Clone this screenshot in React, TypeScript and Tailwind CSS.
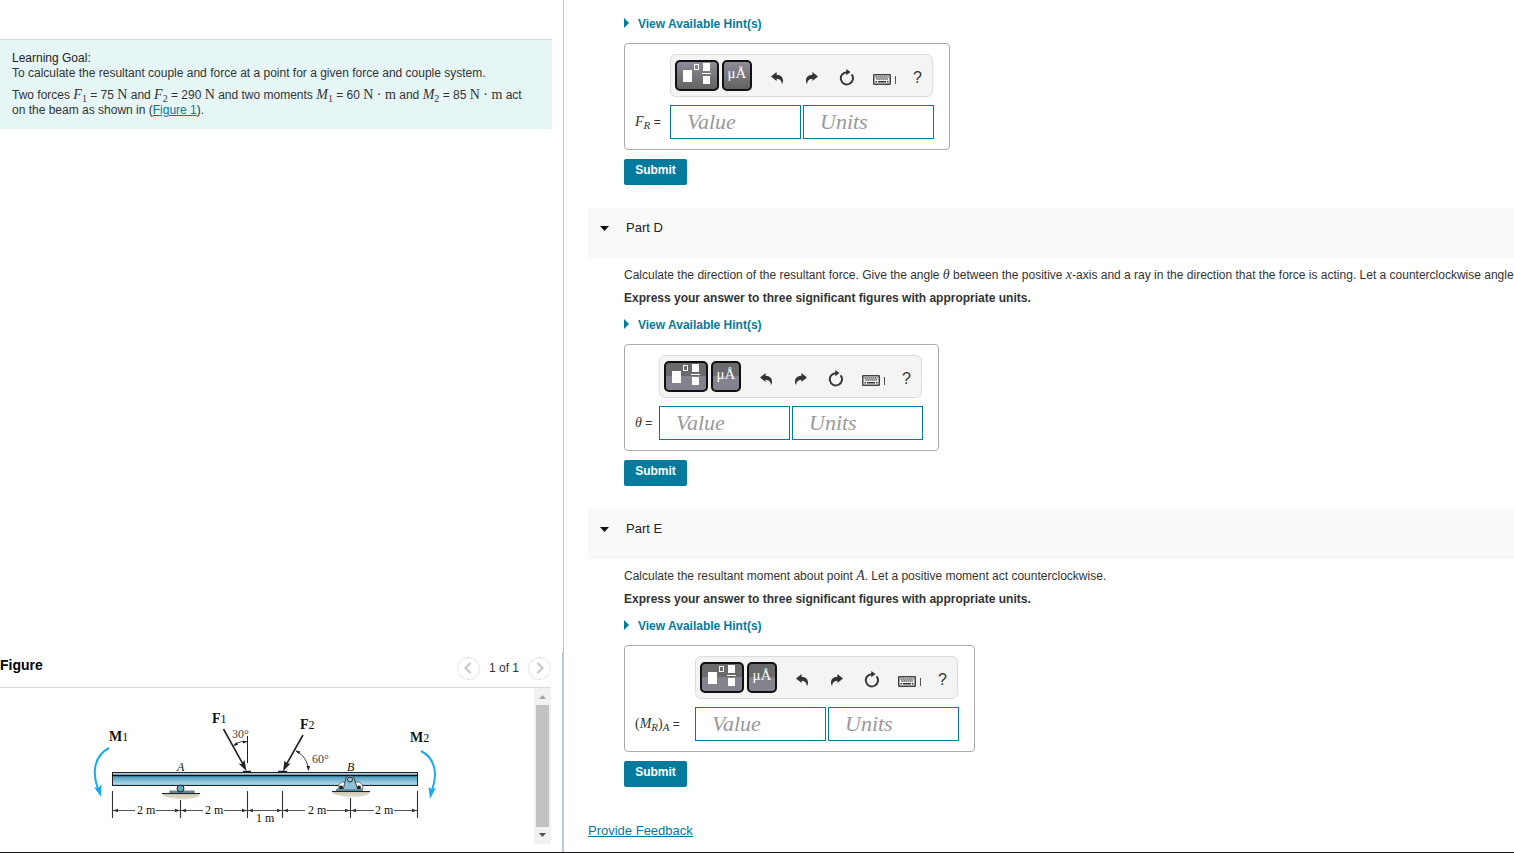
import type { ReactNode } from "react";

interface AnswerProps {
  id: string;
  label: ReactNode;
  labelName: string;
  labelWidth: string;
  buttonFill: string;
}

const FILL_SMOOTH = "bg-linear-to-b from-[#8e8c97] to-[#626262]";
const FILL_SPLIT = "bg-linear-to-b from-[#6a6a6c] from-50% to-[#84838d] to-50%";

function Sym({ name, sub }: { name: string; sub?: string }) {
  return (
    <span className="font-['Liberation_Serif',serif] text-[14px] leading-none italic">
      {name}
      {sub && <span className="relative top-[3px] text-[10px] not-italic">{sub}</span>}
    </span>
  );
}

function ItalicSub({ children }: { children: ReactNode }) {
  return (
    <span className="relative top-[3px] font-['Liberation_Serif',serif] text-[11px] leading-none italic">
      {children}
    </span>
  );
}

function Unit({ children }: { children: ReactNode }) {
  return <span className="font-['Liberation_Serif',serif] text-[14px] leading-none">{children}</span>;
}

function UndoIcon({ flip }: { flip?: boolean }) {
  return (
    <svg viewBox="0 0 12 14" className={flip ? "h-3.5 w-3 -scale-x-100" : "h-3.5 w-3"} fill="#333">
      <path d="M0 5.500L5.600 1v2.800C9.600 4 12 6.400 12 9.600c0 1.400-.3 2.500-1.200 3.600C11 10.400 9.200 7.900 5.600 7.800V10z" />
    </svg>
  );
}

function ResetIcon() {
  return (
    <svg viewBox="0 0 16 17" className="h-[17px] w-4" fill="none" stroke="#333" strokeWidth="1.900">
      <path d="M12.600 5.400A6.100 6.100 0 1 1 8 3.200" />
      <path d="M7.300 0l4.200 3-4.200 3.200z" fill="#333" stroke="none" />
    </svg>
  );
}

function KeyboardIcon() {
  return (
    <svg viewBox="0 0 18 11" className="mt-1 h-[11px] w-[18px]">
      <rect x="0.750" y="0.750" width="16.500" height="9.500" rx="0.500" fill="#f7f7f7" stroke="#444" strokeWidth="1.500" />
      <path d="M2.500 3h13M3.500 5h12" stroke="#333" strokeWidth="1.400" strokeDasharray="1.200 0.800" />
      <path d="M2.500 7.700h1.500M5 7.700h8M14 7.700h1.500" stroke="#333" strokeWidth="1.400" />
    </svg>
  );
}

function Toolbar({ buttonFill }: { buttonFill: string }) {
  const dark = `flex h-[31px] shrink-0 items-center justify-center rounded-[5px] border-2 border-[#111] ${buttonFill}`;
  const tool = "flex h-full w-[35px] shrink-0 items-center justify-center";
  return (
    <div className="flex h-[43px] w-[263px] items-center rounded-md border border-[#dcdcdc] bg-[#f4f4f4] pl-1">
      <button aria-label="Templates" className={`${dark} w-11 pb-1`}>
        <svg viewBox="0 0 28 22" className="h-[22px] w-7" fill="#fff">
          <rect x="0" y="7" width="9" height="12" />
          <rect x="11.500" y="1.500" width="4" height="5" fill="none" stroke="#fff" />
          <rect x="20" y="0" width="7" height="8" />
          <rect x="19" y="10" width="9" height="1" />
          <rect x="20" y="13" width="7" height="8" />
        </svg>
      </button>
      <button
        aria-label="Symbols"
        className={`${dark} ml-[3px] w-[30px] pb-1 font-['Liberation_Serif',serif] text-[15px] leading-none text-white`}
      >
        μÅ
      </button>
      <div className="ml-[7px] flex h-full items-center pt-1">
        <button aria-label="Undo" className={tool}><UndoIcon /></button>
        <button aria-label="Redo" className={tool}><UndoIcon flip /></button>
        <button aria-label="Reset" className={tool}><ResetIcon /></button>
        <button aria-label="Keyboard shortcuts" className={tool}><KeyboardIcon /></button>
        <span className="-ml-1 mt-1 h-2 w-px shrink-0 bg-[#555]" />
        <button aria-label="Help" className={`${tool} ml-1 text-[16px] text-[#333]`}>?</button>
      </div>
    </div>
  );
}

function Answer({ id, label, labelName, labelWidth, buttonFill }: AnswerProps) {
  const field =
    "h-[34px] w-[131px] border border-[#047a9c] bg-white pl-4 font-['Liberation_Serif',serif] text-[22px] italic outline-none placeholder:text-[#999]";
  return (
    <>
      <button className="flex items-center text-[12px] leading-4 font-bold text-[#047a9c]">
        <svg viewBox="0 0 5 10" className="mr-[9px] mb-0.5 h-[10px] w-[5px]" fill="#047a9c">
          <path d="M0 0l5 5-5 5z" />
        </svg>
        View Available Hint(s)
      </button>
      <div className="mt-[11px] w-fit rounded border border-[#aaa] py-[10px] pr-[15px] pl-[10px]">
        <div className="flex">
          <div className={labelWidth} />
          <Toolbar buttonFill={buttonFill} />
        </div>
        <div className="mt-2 flex items-center">
          <label htmlFor={`${id}-value`} aria-label={labelName} className={`${labelWidth} text-[12px] whitespace-nowrap`}>
            {label}
          </label>
          <div className="flex gap-0.5">
            <input id={`${id}-value`} placeholder="Value" className={field} />
            <input aria-label={`${labelName} units`} placeholder="Units" className={field} />
          </div>
        </div>
      </div>
      <button className="mt-[9px] h-[26px] w-[63px] rounded-[2px] bg-[#047a9c] pb-1 text-[12px] font-bold text-white">
        Submit
      </button>
    </>
  );
}

function Part({ title, question, children }: { title: string; question: ReactNode; children: ReactNode }) {
  return (
    <section className="mt-[23px]">
      <button className="flex h-[50px] w-full items-center bg-[#f9f9f9] pb-[10px] pl-3 text-[13px] text-[#222]">
        <svg viewBox="0 0 9 5" className="mr-[17px] h-[5px] w-[9px]" fill="#111">
          <path d="M0 0h9L4.500 5z" />
        </svg>
        {title}
      </button>
      <div className="pl-9">
        <p className="mt-[9px] text-[12px] leading-4 whitespace-nowrap">{question}</p>
        <p className="mt-[7px] mb-[11px] text-[12px] leading-4 font-bold">
          Express your answer to three significant figures with appropriate units.
        </p>
        {children}
      </div>
    </section>
  );
}

// small arrowheads at both ends of a dimension line
function Dim({ from, to }: { from: number; to: number }) {
  return (
    <path
      d={`M${from} 122.500l5-1.800v3.600zM${to} 122.500l-5-1.800v3.600z`}
      fill="#333"
    />
  );
}

function BeamFigure() {
  return (
    <svg
      viewBox="0 0 534 156"
      className="h-[156px] w-[534px] shrink-0 font-['Liberation_Serif',serif]"
      role="img"
      aria-label="Beam with forces F1, F2 and moments M1, M2"
    >
      <defs>
        <linearGradient id="beam" x1="0" y1="0" x2="0" y2="1">
          <stop offset="0" stopColor="#3d93b8" />
          <stop offset="0.300" stopColor="#4b9cbf" />
          <stop offset="0.850" stopColor="#a9d5e6" />
          <stop offset="1" stopColor="#7fb9d2" />
        </linearGradient>
        <linearGradient id="ground" x1="0" y1="0" x2="0" y2="1">
          <stop offset="0" stopColor="#c9c5b2" />
          <stop offset="1" stopColor="#e9e6d8" />
        </linearGradient>
      </defs>

      {/* Moments */}
      <g fill="none" stroke="#1ca8ec" strokeWidth="2">
        <path d="M109 60C92 69 93 88 98 101" />
        <path d="M421 63C435 70 438 86 432 102" />
      </g>
      <path d="M101 109L94 99l4 1.500 3.500-4.500z" fill="#1ca8ec" />
      <path d="M430 111L428.500 99l3.500 2.500 4-2z" fill="#1ca8ec" />

      {/* Beam */}
      <rect x="112.500" y="84.500" width="305" height="13" fill="url(#beam)" stroke="#222" />
      <rect x="113" y="85" width="304" height="2" fill="#a8cfdf" />
      <path d="M112 87.500h306" stroke="#111" strokeWidth="1.300" />

      {/* Roller at A */}
      <path d="M162 106h38c-2 4-7 4-12 5s-13 0-17-1-7-1-9-4z" fill="url(#ground)" />
      <path d="M162 105.500h38" stroke="#222" />
      <rect x="170" y="103" width="24" height="2" fill="#7fb6cc" stroke="#222" strokeWidth="0.600" />
      <circle cx="180.500" cy="100.500" r="3.500" fill="#5aa5c0" stroke="#222" />

      {/* Pin at B */}
      <path d="M332 104h38c-2 4-7 4-12 5s-13 0-17-1-7-1-9-4z" fill="url(#ground)" />
      <path d="M338 101c0-4 2-7 5-7h15c3 0 5 3 5 7z" fill="#f5f9fb" stroke="#444" strokeWidth="0.700" />
      <path d="M346 90c1-3 7-3 8 0l4 12h-15z" fill="#8dc0d6" stroke="#222" strokeWidth="0.800" />
      <circle cx="350" cy="91.500" r="2.500" fill="#9ec9da" stroke="#222" />
      <circle cx="341" cy="99.500" r="2" fill="#222" />
      <circle cx="359" cy="99.500" r="2" fill="#222" />
      <rect x="336" y="101" width="27" height="2" fill="#5b8ca0" />
      <path d="M332 103.500h38" stroke="#222" />

      {/* Forces */}
      <g stroke="#222" fill="none">
        <path d="M223.500 41L244 78M303 47L285.500 78" strokeWidth="1.600" />
        <path d="M247.500 48v27" />
        <path d="M243 83.500h8M278 83.500h9" strokeWidth="1.500" />
        <path d="M234 57c4-3 9-4 13-3.500" strokeWidth="0.900" />
        <path d="M296 63c7 3 12 11 12.500 19" strokeWidth="0.900" />
      </g>
      <path d="M246.500 83l-8-7.500 3 .5 3-4zM283 83.500l1.500-11 2.500 3 3.500 0z" fill="#222" />
      <path d="M233 58l3.500-4 1.500 3zM247 54l-4-1.500v3zM295.500 62.500l5 1-2 2.500zM308.500 83l-2-5h3.500z" fill="#222" />

      {/* Dimensions */}
      <path
        d="M112.500 103v27M180.500 112v18M247.500 103v27M282.500 103v27M350.500 110v20M417.500 103v27"
        stroke="#333"
        strokeWidth="1.100"
      />
      <path
        d="M113 122.500h22M156 122.500h47M224 122.500h81M327 122.500h47M394 122.500h23"
        stroke="#444"
        strokeWidth="0.900"
      />
      <Dim from={113} to={180} />
      <Dim from={181} to={247} />
      <Dim from={248} to={282} />
      <Dim from={283} to={350} />
      <Dim from={351} to={417} />

      <g fill="#111" fontSize="12">
        <text x="137" y="126">2 m</text>
        <text x="205" y="126">2 m</text>
        <text x="256" y="134">1 m</text>
        <text x="308" y="126">2 m</text>
        <text x="375" y="126">2 m</text>
        <text x="232" y="50" fill="#444">30°</text>
        <text x="312" y="75" fill="#444">60°</text>
        <text x="177" y="83" fontStyle="italic">A</text>
        <text x="347" y="83" fontStyle="italic">B</text>
      </g>
      <g fill="#111" fontSize="14" fontWeight="bold">
        <text x="109" y="53">M<tspan fontSize="12" fontWeight="normal">1</tspan></text>
        <text x="212" y="35">F<tspan fontSize="12" fontWeight="normal">1</tspan></text>
        <text x="300" y="41">F<tspan fontSize="12" fontWeight="normal">2</tspan></text>
        <text x="410" y="54">M<tspan fontSize="12" fontWeight="normal">2</tspan></text>
      </g>
    </svg>
  );
}

function PagerButton({ label, d }: { label: string; d: string }) {
  return (
    <button aria-label={label} className="flex h-[23px] w-[23px] items-center justify-center rounded-full border border-[#e2e2e2]">
      <svg viewBox="0 0 8 12" className="h-3 w-2" fill="none" stroke="#c4c4c4" strokeWidth="2">
        <path d={d} />
      </svg>
    </button>
  );
}

export default function App() {
  return (
    <div className="flex h-screen overflow-hidden border-b border-[#1c1616] bg-white font-['Liberation_Sans',Arial,sans-serif] text-[#333]">
      <aside className="flex w-[564px] shrink-0 flex-col">
        <div className="flex-1 border-r border-[#c3c8d6] pt-[39px] pr-[11px]">
          <div className="h-[90px] border-t border-[#dcdcdc] bg-[#e6f6f7] px-3 pt-[11px] text-[12px] leading-[15px]">
            <h2 className="text-[#222]">Learning Goal:</h2>
            <p>To calculate the resultant couple and force at a point for a given force and couple system.</p>
            <p className="mt-[7px] pr-3">
              Two forces <Sym name="F" sub="1" /> = 75 <Unit>N</Unit> and <Sym name="F" sub="2" /> = 290 <Unit>N</Unit> and
              two moments <Sym name="M" sub="1" /> = 60 <Unit>N · m</Unit> and <Sym name="M" sub="2" /> = 85{" "}
              <Unit>N · m</Unit> act on the beam as shown in (
              <a href="#figure" className="text-[#047a9c] underline">Figure 1</a>).
            </p>
          </div>
        </div>

        <div id="figure" className="border-r-2 border-[#b9cce0] pr-[11px] pb-2">
          <div className="flex h-9 items-center justify-between border-b border-[#dcdcdc] pb-[3px]">
            <h2 className="pb-[5px] text-[14px] font-bold text-black">Figure</h2>
            <div className="flex items-center gap-[9px] text-[12px]">
              <PagerButton label="Previous figure" d="M6.500 1L1.500 6l5 5" />
              <span>1 of 1</span>
              <PagerButton label="Next figure" d="M1.500 1l5 5-5 5" />
            </div>
          </div>
          <div className="flex justify-between">
            <BeamFigure />
            <div className="flex w-[17px] flex-col items-center bg-[#f1f1f1]">
              <svg viewBox="0 0 17 17" className="h-[17px] w-[17px]" fill="#a3a3a3">
                <path d="M5 11h7L8.500 7z" />
              </svg>
              <div className="w-[13px] flex-1 bg-[#c1c1c1]" />
              <svg viewBox="0 0 17 17" className="h-[17px] w-[17px]" fill="#505050">
                <path d="M5 6h7l-3.500 4z" />
              </svg>
            </div>
          </div>
        </div>
      </aside>

      <main className="min-w-0 flex-1 overflow-hidden pl-6">
        <div className="pt-4 pl-9">
          <Answer
            id="part-c"
            label={<><Sym name="F" /><ItalicSub>R</ItalicSub> =</>}
            labelName="Resultant force"
            labelWidth="w-[35px]"
            buttonFill={FILL_SMOOTH}
          />
        </div>

        <Part
          title="Part D"
          question={
            <>
              Calculate the direction of the resultant force. Give the angle <Sym name="θ" /> between the positive{" "}
              <Sym name="x" />-axis and a ray in the direction that the force is acting. Let a counterclockwise angle be positive.
            </>
          }
        >
          <Answer
            id="part-d"
            label={<><Sym name="θ" /> =</>}
            labelName="Angle theta"
            labelWidth="w-6"
            buttonFill={FILL_SPLIT}
          />
        </Part>

        <Part
          title="Part E"
          question={
            <>
              Calculate the resultant moment about point <Sym name="A" />. Let a positive moment act counterclockwise.
            </>
          }
        >
          <Answer
            id="part-e"
            label={
              <>
                <Unit>(</Unit><Sym name="M" /><ItalicSub>R</ItalicSub><Unit>)</Unit><ItalicSub>A</ItalicSub> =
              </>
            }
            labelName="Resultant moment about A"
            labelWidth="w-[60px]"
            buttonFill={FILL_SPLIT}
          />
        </Part>

        <a href="#feedback" className="mt-[34px] inline-block text-[13px] text-[#047a9c] underline">
          Provide Feedback
        </a>
      </main>
    </div>
  );
}
